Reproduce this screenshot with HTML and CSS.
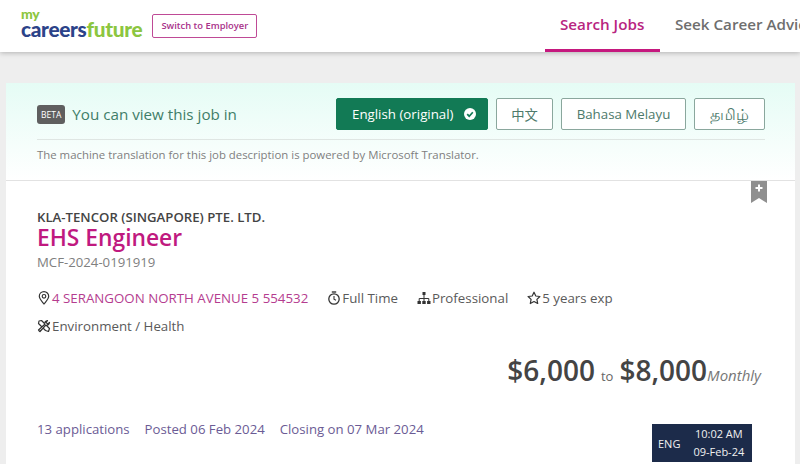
FILE: index.html
```html
<!DOCTYPE html>
<html lang="en">
<head>
    <meta charset="UTF-8">
    <title>EHS Engineer - MyCareersFuture</title>
    <link rel="stylesheet" href="styles.css">
</head>
<body>
    <header class="topbar">
        <div class="brand">
            <a class="logo" href="#">
                <span class="logo-my">my</span>
                <span class="logo-word"><span class="logo-careers">careers</span><span class="logo-future">future</span></span>
            </a>
            <a class="switch-btn" href="#">Switch to Employer</a>
        </div>
        <nav class="nav">
            <a class="nav-item active" href="#">Search Jobs</a>
            <a class="nav-item" href="#">Seek Career Advice</a>
        </nav>
    </header>

    <main class="card">
        <section class="translate">
            <div class="translate-row">
                <div class="translate-label">
                    <span class="beta">BETA</span>
                    <span class="view-text">You can view this job in</span>
                </div>
                <div class="lang-list">
                    <button class="lang selected" type="button">English (original)
                        <svg class="check" viewBox="0 0 12 12" width="12" height="12">
                            <circle cx="6" cy="6" r="6" fill="#fff"/>
                            <path d="M3.2 6.2l2 2 3.6-4" fill="none" stroke="#127a55" stroke-width="1.7"/>
                        </svg>
                    </button>
                    <button class="lang lang-zh" type="button">中文</button>
                    <button class="lang lang-ms" type="button">Bahasa Melayu</button>
                    <button class="lang lang-ta" type="button">தமிழ்</button>
                </div>
            </div>
            <p class="powered">The machine translation for this job description is powered by Microsoft Translator.</p>
        </section>

        <section class="job">
            <svg class="bookmark" viewBox="0 0 16 22" width="16" height="22">
                <path d="M0 0h16v22l-8-5-8 5z" fill="#8f8f8f"/>
                <path d="M8 3.5v7M4.5 7h7" stroke="#fff" stroke-width="2"/>
            </svg>
            <p class="company">KLA-TENCOR (SINGAPORE) PTE. LTD.</p>
            <h1 class="title">EHS Engineer</h1>
            <p class="ref">MCF-2024-0191919</p>

            <div class="meta-row">
                <span class="meta meta-address">
                    <svg class="icon" viewBox="0 0 14 14" width="14" height="14">
                        <path d="M7 13C5 10.500 2.300 8 2.300 5.300a4.700 4.700 0 0 1 9.400 0C11.700 8 9 10.500 7 13z" fill="none" stroke="#333" stroke-width="1.200"/>
                        <circle cx="7" cy="5.300" r="1.800" fill="none" stroke="#333" stroke-width="1.200"/>
                    </svg>
                    <a href="#">4 SERANGOON NORTH AVENUE 5 554532</a>
                </span>
                <span class="meta">
                    <svg class="icon" viewBox="0 0 14 14" width="14" height="14">
                        <path d="M4.800 1h4.400" stroke="#333" stroke-width="1.400"/>
                        <circle cx="7" cy="8" r="5.200" fill="none" stroke="#333" stroke-width="1.300"/>
                        <path d="M7 5v3.200l2 1" fill="none" stroke="#333" stroke-width="1.100"/>
                    </svg>
                    Full Time
                </span>
                <span class="meta">
                    <svg class="icon" viewBox="0 0 14 14" width="14" height="14">
                        <path d="M5.500 1h3v3h-3zM0.500 10h3.400v3H0.500zM5.300 10h3.400v3H5.300zM10.100 10h3.400v3h-3.400z" fill="#333"/>
                        <path d="M7 4v6M2.200 10V7.500h9.600V10" fill="none" stroke="#333" stroke-width="1"/>
                    </svg>
                    Professional
                </span>
                <span class="meta">
                    <svg class="icon" viewBox="0 0 14 14" width="14" height="14">
                        <path d="M7 1.200l1.800 3.800 4.100.5-3 2.900.8 4.100L7 10.500l-3.700 2 .8-4.100-3-2.900 4.100-.5z" fill="none" stroke="#333" stroke-width="1.200" stroke-linejoin="round"/>
                    </svg>
                    5 years exp
                </span>
            </div>
            <div class="meta-row second">
                <span class="meta">
                    <svg class="icon" viewBox="0 0 14 14" width="14" height="14">
                        <path d="M2 12.500L9 5.500M4.500 1.500L12.500 9.500l-1 3-3-1L1.500 4.500l.5-2.500z" fill="none" stroke="#333" stroke-width="1.200" stroke-linejoin="round"/>
                        <path d="M12.500 3.500a3 3 0 0 1-3.700 2.700L3 12.500 1.500 11 7.800 5.200A3 3 0 0 1 10.500 1.500L9 3.300l1.700 1.700z" fill="#fff" stroke="#333" stroke-width="1.200" stroke-linejoin="round"/>
                    </svg>
                    Environment / Health
                </span>
            </div>

            <div class="salary">
                <span class="amount">$6,000</span>
                <span class="to">to</span>
                <span class="amount">$8,000</span><span class="period">Monthly</span>
            </div>

            <div class="stats">
                <span>13 applications</span>
                <span>Posted 06 Feb 2024</span>
                <span>Closing on 07 Mar 2024</span>
            </div>
        </section>
    </main>

    <div class="clock">
        <span class="clock-lang">ENG</span>
        <span class="clock-time">10:02 AM<br>09-Feb-24</span>
    </div>
</body>
</html>
```

FILE: styles.css
```css
* {
    box-sizing: border-box;
}
html, body {
    height: 464px;
    margin: 0;
    overflow: hidden;
}
body {
    background-color: #eeeeee;
    color: #444;
    font-family: "Open Sans", "Noto Sans", sans-serif;
}
a {
    color: inherit;
    text-decoration: none;
}
p, h1 {
    margin: 0;
}

.topbar {
    display: flex;
    justify-content: space-between;
    height: 52px;
    padding-left: 21px;
    background-color: #fff;
    box-shadow: 0 1px 5px rgba(0,0,0,0.25);
    white-space: nowrap;
}
.brand {
    display: flex;
    align-items: center;
    gap: 10px;
}
.logo {
    display: flex;
    flex-direction: column;
    margin-top: -3px;
    font-family: "Lato", sans-serif;
    font-weight: 900;
    letter-spacing: -0.3px;
}
.logo-my {
    height: 9px;
    color: #8cc63f;
    font-size: 14px;
    line-height: 8px;
}
.logo-word {
    font-size: 20.8px;
    line-height: 20px;
}
.logo-careers {
    color: #2c4389;
}
.logo-future {
    color: #8cc63f;
}
.switch-btn {
    padding: 4px 8px;
    border: 1px solid #bf4a96;
    border-radius: 2px;
    color: #a9328a;
    font-size: 9.4px;
    font-weight: 600;
    line-height: 14px;
}
.nav {
    display: flex;
    width: 300px;
    margin-left: auto;
    padding-left: 45px;
    overflow: hidden;
}
.nav-item {
    flex: none;
    height: 52px;
    padding: 0 15px;
    color: #6e6e6e;
    font-size: 15.2px;
    font-weight: 600;
    line-height: 49px;
}
.nav-item.active {
    width: 115px;
    border-bottom: 3px solid #c5187e;
    color: #b8257f;
}

.card {
    width: 789px;
    margin: 31px 0 0 6px;
    background-color: #fff;
}
.translate {
    height: 98px;
    padding: 15px 30px 0 31px;
    border-bottom: 1px solid #e2e2e2;
    background: linear-gradient(to bottom, #e5fcf5, #ffffff);
}
.translate-row {
    display: flex;
    justify-content: space-between;
    align-items: center;
    height: 42px;
    padding-bottom: 9px;
    border-bottom: 1px solid #dfe6e3;
}
.translate-label {
    display: flex;
    align-items: center;
    gap: 7px;
}
.beta {
    padding: 0 4px;
    border-radius: 3px;
    background-color: #5f5f5f;
    color: #fff;
    font-size: 8.5px;
    line-height: 19px;
}
.view-text {
    color: #3f7d68;
    font-size: 15.2px;
}
.lang-list {
    display: flex;
    gap: 8px;
}
.lang {
    height: 32px;
    padding: 0 15px;
    border: 1px solid #8aa79d;
    border-radius: 2px;
    background-color: #fff;
    color: #4d7a6b;
    font-family: inherit;
    font-size: 13.3px;
    white-space: nowrap;
}
.lang.selected {
    display: flex;
    align-items: center;
    gap: 10px;
    width: 152px;
    padding: 0 8px 0 15px;
    border-color: #127a55;
    background-color: #127a55;
    color: #fff;
}
.check {
    flex: none;
}
.lang-zh {
    width: 57px;
    padding: 0;
    font-family: "Noto Sans CJK SC", sans-serif;
}
.lang-ms {
    width: 125px;
    padding: 0;
}
.lang-ta {
    width: 71px;
    padding: 0;
    font-size: 16px;
}
.powered {
    margin-top: 7px;
    color: #7f7f7f;
    font-size: 11.4px;
}

.job {
    position: relative;
    height: 284px;
    padding: 29px 31px 0;
}
.bookmark {
    position: absolute;
    top: 0;
    right: 28px;
}
.company {
    color: #444;
    font-size: 13.2px;
    font-weight: 600;
    line-height: 15px;
}
.title {
    color: #c0197f;
    font-size: 22.8px;
    font-weight: 600;
    line-height: 26px;
}
.ref {
    margin-top: 3px;
    color: #808080;
    font-size: 13.2px;
    line-height: 17px;
}
.meta-row {
    display: flex;
    gap: 19px;
    margin-top: 17px;
    font-size: 13.3px;
    line-height: 20px;
}
.meta-row.second {
    margin-top: 8px;
}
.meta {
    display: flex;
    align-items: center;
    gap: 1px;
    color: #5a5a5a;
}
.meta-address {
    color: #b53c8f;
}
.icon {
    flex: none;
}
.salary {
    display: flex;
    justify-content: flex-end;
    align-items: baseline;
    margin: 15px 3px 0 0;
    color: #444;
    line-height: 38px;
}
.amount {
    font-size: 28px;
    font-weight: 600;
}
.to {
    margin: 0 6px;
    color: #666;
    font-size: 13px;
}
.period {
    color: #777;
    font-size: 15px;
    font-style: italic;
}
.stats {
    display: flex;
    gap: 15px;
    margin-top: 25px;
    color: #6b5b95;
    font-size: 13.2px;
    line-height: 18px;
}

.clock {
    position: absolute;
    top: 424px;
    left: 652px;
    display: flex;
    align-items: center;
    gap: 13px;
    width: 100px;
    height: 38px;
    padding-left: 6px;
    background-color: #1c2b4a;
    color: #f0f0f0;
    font-size: 11px;
}
.clock-time {
    line-height: 18px;
    text-align: center;
}
```
